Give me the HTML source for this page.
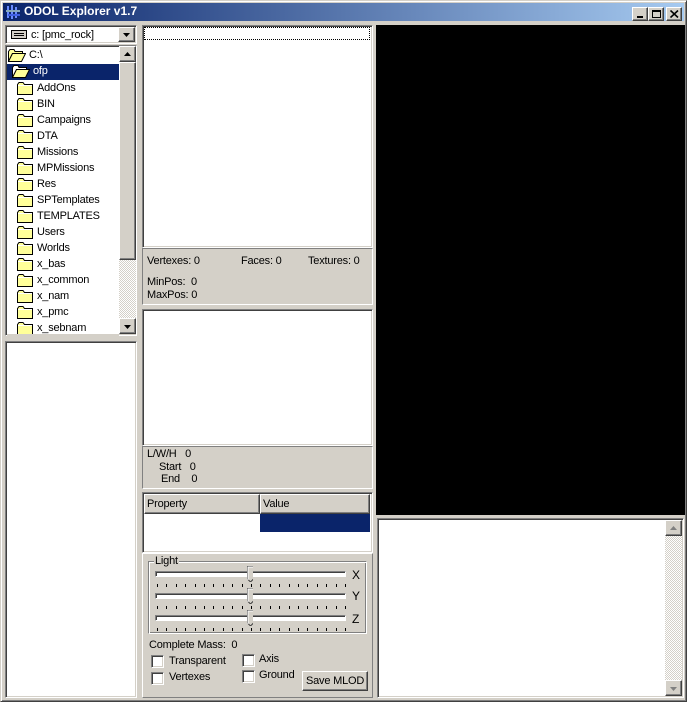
<!DOCTYPE html>
<html><head><meta charset="utf-8">
<style>
*{margin:0;padding:0;box-sizing:border-box}
body{width:687px;height:702px;background:#d4d0c8;font-family:"Liberation Sans",sans-serif;font-size:11px;color:#000;position:relative;overflow:hidden}
.a{position:absolute}
.sunk{border:1px solid;border-color:#808080 #fff #fff #808080;box-shadow:inset 1px 1px 0 #404040,inset -1px -1px 0 #d4d0c8}
.rais{background:#d4d0c8;border:1px solid;border-color:#fff #404040 #404040 #fff;box-shadow:inset -1px -1px 0 #808080,inset 1px 1px 0 #d4d0c8}
.etch{border:1px solid;border-color:#808080 #fff #fff #808080}
.w{background:#fff}
.t{position:absolute;white-space:nowrap;line-height:13px;letter-spacing:-0.2px}
.dith{background-color:#fff;background-image:repeating-conic-gradient(#d4d0c8 0 25%,#fff 0 50%);background-size:2px 2px}
.tick{position:absolute;width:1px;height:3px;background:#000}
.cb{position:absolute;width:13px;height:13px;background:#fff;border:1px solid;border-color:#808080 #fff #fff #808080;box-shadow:inset 1px 1px 0 #404040,inset -1px -1px 0 #d4d0c8}
.trk{position:absolute;height:6px;left:155px;width:191px;background:#fff;border:1px solid;border-color:#808080 #fff #fff #808080;box-shadow:inset 1px 1px 0 #404040}
.thumb{position:absolute;width:6px;height:16px}
</style></head><body>
<div class="a" style="left:0;top:0;width:687px;height:702px;border:1px solid;border-color:#d4d0c8 #404040 #404040 #d4d0c8;box-shadow:inset 1px 1px 0 #fff,inset -1px -1px 0 #808080"></div>
<div class="a" style="left:3px;top:3px;width:681px;height:18px;background:linear-gradient(to right,#0a246a,#a6caf0)"></div>
<svg class="a" style="left:5px;top:4px" width="16" height="16"><g fill="#6a8cff"><rect x="2" y="2" width="2" height="12"/><rect x="6" y="1" width="2" height="14"/><rect x="10" y="3" width="2" height="11"/><rect x="1" y="6" width="14" height="2" fill="#8ab"/><rect x="3" y="10" width="12" height="2" fill="#4060e0"/></g></svg>
<div class="t" style="left:24px;top:5px;color:#fff;font-weight:bold;font-size:12px;letter-spacing:0">ODOL Explorer v1.7</div>
<div class="a rais" style="left:632px;top:7px;width:16px;height:14px"><div class="a" style="left:4px;top:8px;width:6px;height:2px;background:#000"></div></div>
<div class="a rais" style="left:648px;top:7px;width:16px;height:14px"><div class="a" style="left:3px;top:2px;width:9px;height:8px;border:1px solid #000;border-top-width:2px"></div></div>
<div class="a rais" style="left:666px;top:7px;width:16px;height:14px"><svg class="a" style="left:3px;top:2px" width="9" height="8"><path d="M0.5 0.5L8 7.5M8 0.5L0.5 7.5" stroke="#000" stroke-width="1.6"/></svg></div>

<div class="a sunk w" style="left:5px;top:25px;width:132px;height:19px"></div>
<svg class="a" style="left:11px;top:29px" width="16" height="11"><rect x="0.5" y="1.5" width="15" height="8" fill="#d4d0c8" stroke="#000"/><rect x="3" y="4" width="10" height="1" fill="#000"/><rect x="3" y="6" width="10" height="1" fill="#000"/></svg>
<div class="t" style="left:31px;top:29px">c: [pmc_rock]</div>
<div class="a rais" style="left:118px;top:27px;width:17px;height:15px"><svg class="a" style="left:4px;top:5px" width="7" height="4"><path d="M0 0H7L3.5 4Z" fill="#000"/></svg></div>

<div class="a sunk w" style="left:5px;top:45px;width:132px;height:291px"></div>
<div class="a" style="left:7px;top:64px;width:112px;height:16px;background:#0a246a"></div>
<div class="a rais" style="left:119px;top:46px;width:17px;height:16px"><svg class="a" style="left:4px;top:5px" width="7" height="4"><path d="M0 4H7L3.5 0Z" fill="#000"/></svg></div>
<div class="a rais" style="left:119px;top:62px;width:17px;height:198px"></div>
<div class="a dith" style="left:119px;top:260px;width:17px;height:58px"></div>
<div class="a rais" style="left:119px;top:318px;width:17px;height:16px"><svg class="a" style="left:4px;top:6px" width="7" height="4"><path d="M0 0H7L3.5 4Z" fill="#000"/></svg></div>

<svg class="a" style="left:8px;top:49px" width="18" height="13"><path d="M0.5 2.5L2 0.5H6L7 2.5H14.5V4.5H4.5L0.5 12.5Z" fill="#ffff99" stroke="#000"/><path d="M0.5 12.5L4.5 4.5H17.5L13.5 12.5Z" fill="#ffff99" stroke="#000"/></svg>
<div class="t" style="left:29px;top:49px">C:\</div>
<svg class="a" style="left:12px;top:65px" width="18" height="13"><path d="M0.5 2.5L2 0.5H6L7 2.5H14.5V4.5H4.5L0.5 12.5Z" fill="#fff" stroke="#000"/><path d="M0.5 12.5L4.5 4.5H17.5L13.5 12.5Z" fill="#ffff99" stroke="#000"/></svg>
<div class="t" style="left:33px;top:65px;color:#fff">ofp</div>

<div id="tree"></div>
<script>
var n=["AddOns","BIN","Campaigns","DTA","Missions","MPMissions","Res","SPTemplates","TEMPLATES","Users","Worlds","x_bas","x_common","x_nam","x_pmc","x_sebnam"];
var h="";for(var i=0;i<n.length;i++){var y=81+i*16;
h+='<svg class="a" style="left:17px;top:'+(y+1)+'px" width="16" height="13"><path d="M0.5 2.5L2 0.5H6L7.5 2.5H15.5V12.5H0.5Z" fill="#ffff99" stroke="#000"/><path d="M1 3.5H15" stroke="#fff"/></svg>';
h+='<div class="t" style="left:37px;top:'+(y+1)+'px">'+n[i]+'</div>';}
document.getElementById("tree").outerHTML=h;
</script>
<div class="a" style="left:7px;top:334px;width:112px;height:2px;background:#d4d0c8"></div>

<div class="a sunk w" style="left:5px;top:341px;width:132px;height:357px"></div>

<div class="a sunk w" style="left:142px;top:25px;width:231px;height:223px"></div>
<div class="a" style="left:144px;top:27px;width:226px;height:13px;border:1px dotted #000"></div>
<div class="a etch" style="left:142px;top:248px;width:231px;height:57px"></div>
<div class="t" style="left:147px;top:255px">Vertexes: 0</div>
<div class="t" style="left:241px;top:255px">Faces: 0</div>
<div class="t" style="left:308px;top:255px">Textures: 0</div>
<div class="t" style="left:147px;top:276px">MinPos:&nbsp; 0</div>
<div class="t" style="left:147px;top:289px">MaxPos: 0</div>
<div class="a sunk w" style="left:142px;top:309px;width:231px;height:137px"></div>
<div class="a etch" style="left:142px;top:446px;width:231px;height:43px"></div>
<div class="t" style="left:147px;top:448px">L/W/H&nbsp;&nbsp; 0</div>
<div class="t" style="left:159px;top:461px">Start&nbsp;&nbsp; 0</div>
<div class="t" style="left:161px;top:473px">End&nbsp;&nbsp;&nbsp; 0</div>
<div class="a sunk w" style="left:142px;top:492px;width:231px;height:61px"></div>
<div class="a rais" style="left:144px;top:494px;width:116px;height:20px"></div>
<div class="a rais" style="left:260px;top:494px;width:110px;height:20px"></div>
<div class="t" style="left:147px;top:498px">Property</div>
<div class="t" style="left:263px;top:498px">Value</div>
<div class="a" style="left:260px;top:514px;width:110px;height:18px;background:#0a246a"></div>
<div class="a" style="left:142px;top:553px;width:231px;height:145px;border:1px solid;border-color:#fff #808080 #808080 #fff"></div>
<div class="a" style="left:148px;top:561px;width:219px;height:73px;border:1px solid;border-color:#808080 #fff #fff #808080;box-shadow:1px 1px 0 #fff inset, -1px -1px 0 #808080 inset"></div>
<div class="t" style="left:154px;top:555px;background:#d4d0c8;padding:0 1px">Light</div>
<div class="trk" style="top:571px"></div>
<div class="trk" style="top:593px"></div>
<div class="trk" style="top:615px"></div>
<div id="sl"></div>
<script>
var s="";var ys=[566,588,610];
for(var k=0;k<3;k++){var y=ys[k];
s+='<svg class="thumb" style="left:247px;top:'+y+'px" width="7" height="17"><path d="M0.5 0.5H6.5V13L3.5 16L0.5 13Z" fill="#d4d0c8" stroke="#404040"/><path d="M1 14V1H6" stroke="#fff" fill="none"/></svg>';
for(var j=0;j<21;j++){var x=157+Math.round(j*9.4);s+='<div class="tick" style="left:'+x+'px;top:'+(y+18)+'px"></div>';}}
document.getElementById("sl").outerHTML=s;
</script>
<div class="t" style="left:352px;top:569px;font-size:12px">X</div>
<div class="t" style="left:352px;top:590px;font-size:12px">Y</div>
<div class="t" style="left:352px;top:613px;font-size:12px">Z</div>
<div class="t" style="left:149px;top:639px">Complete Mass:&nbsp; 0</div>
<div class="cb" style="left:151px;top:655px"></div><div class="t" style="left:169px;top:655px">Transparent</div>
<div class="cb" style="left:151px;top:672px"></div><div class="t" style="left:169px;top:671px">Vertexes</div>
<div class="cb" style="left:242px;top:654px"></div><div class="t" style="left:259px;top:653px">Axis</div>
<div class="cb" style="left:242px;top:670px"></div><div class="t" style="left:259px;top:669px">Ground</div>
<div class="a rais" style="left:302px;top:671px;width:66px;height:20px"></div>
<div class="t" style="left:306px;top:675px;font-size:11px">Save MLOD</div>

<div class="a" style="left:376px;top:25px;width:309px;height:490px;background:#000"></div>
<div class="a sunk w" style="left:377px;top:518px;width:307px;height:180px"></div>
<div class="a dith" style="left:665px;top:520px;width:17px;height:176px"></div>
<div class="a rais" style="left:665px;top:520px;width:17px;height:16px"><svg class="a" style="left:4px;top:5px" width="7" height="4"><path d="M0 4H7L3.5 0Z" fill="#808080"/></svg></div>
<div class="a rais" style="left:665px;top:680px;width:17px;height:16px"><svg class="a" style="left:4px;top:6px" width="7" height="4"><path d="M0 0H7L3.5 4Z" fill="#808080"/></svg></div>
</body></html>
